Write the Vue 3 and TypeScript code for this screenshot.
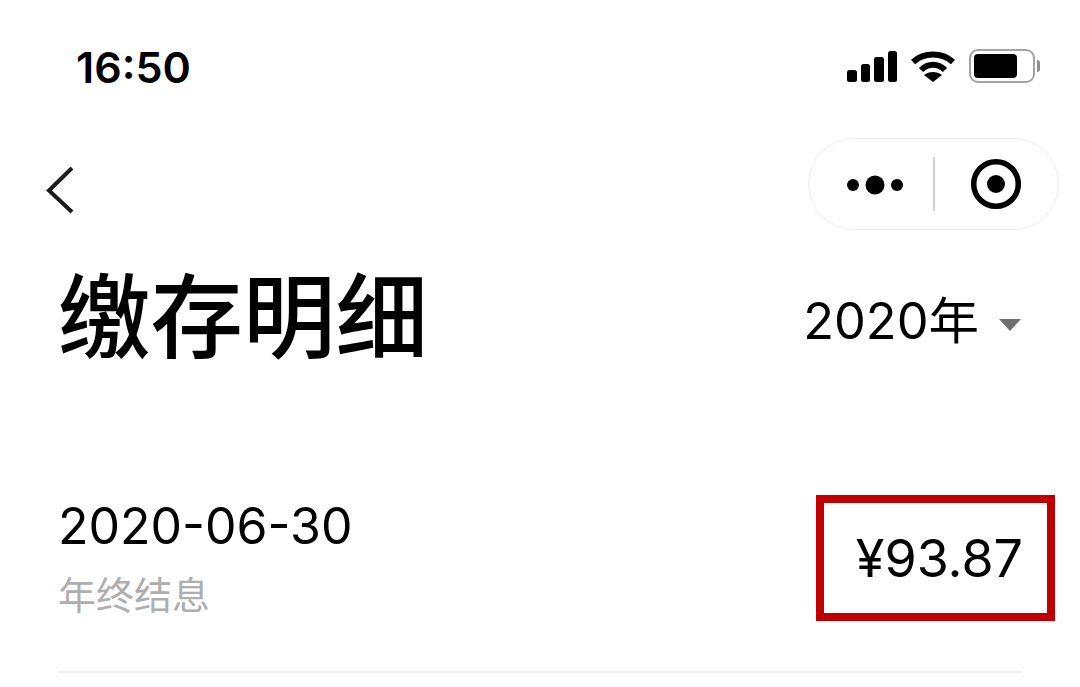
<script setup lang="ts">
const bars: number[] = [12, 18, 25, 31]
</script>

<template>
  <div class="page">
    <header class="status">
      <span class="time">16:50</span>
      <div class="status-icons">
        <div class="signal">
          <i v-for="h in bars" :key="h" class="bar" :style="{ height: h + 'px' }"></i>
        </div>
        <svg class="wifi" width="44" height="32" viewBox="0 0 44 32">
          <path d="M2 12 C13 2 31 2 42 12" fill="none" stroke="#000" stroke-width="6" />
          <path d="M10 20 C17 13 27 13 34 20" fill="none" stroke="#000" stroke-width="6" />
          <path d="M22 32 L13 25 C18 21 26 21 31 25 Z" fill="#000" />
        </svg>
        <div class="battery">
          <div class="battery-body"><div class="battery-fill"></div></div>
          <div class="battery-cap"></div>
        </div>
      </div>
    </header>

    <nav class="navbar">
      <svg class="back" width="30" height="50" viewBox="0 0 30 50">
        <path d="M27 3 L4 25.500 L27 47" fill="none" stroke="#1c1c1c" stroke-width="4" />
      </svg>
      <div class="capsule">
        <div class="capsule-side dots">
          <svg width="56" height="20" viewBox="0 0 56 20">
            <circle cx="6" cy="10" r="6" fill="#000" />
            <circle cx="28" cy="10" r="9.500" fill="#000" />
            <circle cx="50" cy="10" r="6" fill="#000" />
          </svg>
        </div>
        <div class="capsule-line"></div>
        <div class="capsule-side">
          <svg width="52" height="52" viewBox="0 0 52 52">
            <circle cx="26" cy="26" r="22.300" fill="none" stroke="#000" stroke-width="5.500" />
            <circle cx="26" cy="26" r="9" fill="#000" />
          </svg>
        </div>
      </div>
    </nav>

    <section class="heading">
      <h1 class="title">缴存明细</h1>
      <div class="year">
        <span>2020年</span>
        <i class="caret"></i>
      </div>
    </section>

    <section class="record">
      <div class="record-left">
        <div class="date">2020-06-30</div>
        <div class="kind">年终结息</div>
      </div>
      <div class="amount-box">¥93.87</div>
    </section>
    <div class="divider"></div>
  </div>
</template>

<style>
html, body { margin: 0; background: #fff; }
</style>

<style scoped>
.page {
  width: 1080px;
  height: 687px;
  overflow: hidden;
  background: #fff;
  color: #000;
  font-family: Inter, "Noto Sans CJK SC", sans-serif;
}
.status {
  height: 64px;
  padding: 35px 40px 0 76px;
  margin-bottom: -5px;
  display: flex;
  justify-content: space-between;
  align-items: center;
}
.time {
  font-size: 43px;
  font-weight: 600;
}
.status-icons { display: flex; align-items: center; gap: 14px; margin-top: -2px; }
.signal { display: flex; align-items: flex-end; gap: 4px; height: 32px; }
.bar { width: 9.500px; background: #000; border-radius: 2.500px; display: block; }
.wifi { display: block; }
.battery { display: flex; align-items: center; gap: 2px; }
.battery-body {
  width: 56px;
  height: 24px;
  padding: 3px;
  border: 2.500px solid #a3a3a3;
  border-radius: 9px;
}
.battery-fill { height: 100%; width: 76%; background: #000; border-radius: 4px; }
.battery-cap { width: 3px; height: 12px; background: #8e8e8e; border-radius: 0 3px 3px 0; }
.navbar {
  margin-top: 44px;
  height: 92px;
  padding: 0 21px 0 45px;
  display: flex;
  justify-content: space-between;
  align-items: center;
}
.back { display: block; margin-top: 12px; }
.capsule {
  width: 251px;
  height: 92px;
  box-sizing: border-box;
  border: 1.500px solid #eeeeee;
  border-radius: 46px;
  display: flex;
  align-items: center;
}
.capsule-side { flex: 1; display: flex; justify-content: center; align-items: center; }
.capsule-side svg { display: block; }
.dots { flex: 0 0 124px; box-sizing: border-box; padding-left: 7px; padding-top: 2px; }
.capsule-line { width: 1.500px; height: 54px; background: #cfcfcf; }
.heading {
  margin-top: 29px;
  padding: 0 59px 0 58px;
  display: flex;
  justify-content: space-between;
  align-items: center;
  height: 116px;
}
.title {
  margin: -12px 0 0;
  font-size: 92.500px;
  font-weight: 500;
  line-height: 116px;
  font-family: "Noto Sans CJK SC", sans-serif;
}
.year { display: flex; align-items: center; gap: 20px; font-size: 50.500px; }
.caret {
  display: block;
  width: 0;
  height: 0;
  border-left: 11.500px solid transparent;
  border-right: 11.500px solid transparent;
  border-top: 12px solid #6f6f6f;
  margin-top: 16px;
}
.record {
  margin-top: 120px;
  padding: 0 25px 0 58px;
  display: flex;
  justify-content: space-between;
  align-items: flex-start;
}
.date { font-size: 50px; line-height: 60px; margin-top: 1px; }
.kind { margin-top: 14px; font-size: 38px; line-height: 50px; color: #aeaeae; }
.amount-box {
  width: 239px;
  height: 126px;
  box-sizing: border-box;
  border: 8px solid #c00000;
  padding-right: 24px;
  display: flex;
  align-items: center;
  justify-content: flex-end;
  font-size: 52px;
}
.divider { margin: 50px 58px 0; height: 2px; background: #f0f0f0; }
</style>
